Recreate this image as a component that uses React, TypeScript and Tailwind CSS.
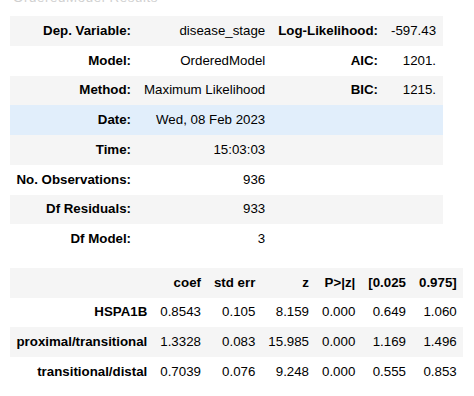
const info: [string, string, string, string][] = [
  ["Dep. Variable:", "disease_stage", "Log-Likelihood:", "-597.43"],
  ["Model:", "OrderedModel", "AIC:", "1201."],
  ["Method:", "Maximum Likelihood", "BIC:", "1215."],
  ["Date:", "Wed, 08 Feb 2023", "", ""],
  ["Time:", "15:03:03", "", ""],
  ["No. Observations:", "936", "", ""],
  ["Df Residuals:", "933", "", ""],
  ["Df Model:", "3", "", ""],
];

const coefHead = ["", "coef", "std err", "z", "P>|z|", "[0.025", "0.975]"];

const coefs = [
  ["HSPA1B", "0.8543", "0.105", "8.159", "0.000", "0.649", "1.060"],
  ["proximal/transitional", "1.3328", "0.083", "15.985", "0.000", "1.169", "1.496"],
  ["transitional/distal", "0.7039", "0.076", "9.248", "0.000", "0.555", "0.853"],
];

function rowBg(i: number, hovered: boolean) {
  if (hovered) return "bg-[#e1eefb]";
  return i % 2 === 0 ? "bg-[#f5f5f5]" : "bg-white";
}

export default function App() {
  return (
    <div
      className="w-[474px] h-[396px] overflow-hidden bg-white text-[13.3px] text-black pl-[10px]"
      style={{ fontFamily: '"Liberation Sans", Arial, sans-serif' }}
    >
      <div className="h-[16px] overflow-hidden relative">
        <div className="absolute left-[3px] top-[-9px] leading-[13px] text-[#d0d0d0] tracking-[0.6px]">
          OrderedModel Results
        </div>
      </div>

      <table className="border-collapse">
        <tbody>
          {info.map((r, i) => (
            <tr key={i} className={`h-[29.75px] ${rowBg(i, i === 3)}`}>
              <th className="text-right font-bold px-[6.5px] py-0 whitespace-nowrap">{r[0]}</th>
              <td className="text-right px-[6.5px] py-0 whitespace-nowrap">{r[1]}</td>
              <th className="text-right font-bold px-[6.5px] py-0 whitespace-nowrap">{r[2]}</th>
              <td className="text-right px-[6.5px] py-0 whitespace-nowrap">{r[3]}</td>
            </tr>
          ))}
        </tbody>
      </table>

      <table className="border-collapse mt-[14px]">
        <tbody>
          <tr className="h-[29.5px] bg-[#f5f5f5]">
            {coefHead.map((h, i) => (
              <th key={i} className="text-right font-bold px-[6.5px] py-0 whitespace-nowrap">
                {h}
              </th>
            ))}
          </tr>
          {coefs.map((r, i) => (
            <tr key={i} className={`h-[29.75px] ${i % 2 === 1 ? "bg-[#f5f5f5]" : "bg-white"}`}>
              <th className="text-right font-bold px-[6.5px] py-0 whitespace-nowrap">{r[0]}</th>
              {r.slice(1).map((v, j) => (
                <td key={j} className="text-right px-[6.5px] py-0 whitespace-nowrap">
                  {v}
                </td>
              ))}
            </tr>
          ))}
        </tbody>
      </table>
    </div>
  );
}
